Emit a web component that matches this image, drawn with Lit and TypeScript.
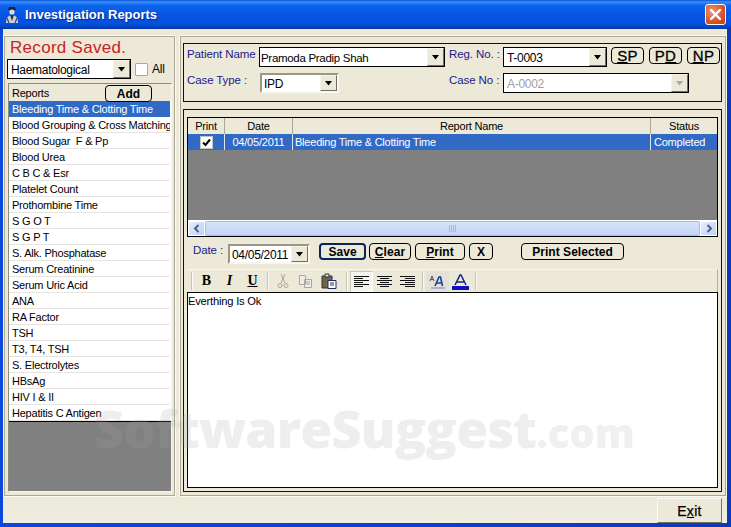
import { LitElement, html, css, svg } from "lit";
import { customElement } from "lit/decorators.js";

const reports = ["Bleeding Time & Clotting Time","Blood Grouping & Cross Matching","Blood Sugar  F & Pp","Blood Urea","C B C & Esr","Platelet Count","Prothombine Time","S G O T","S G P T","S. Alk. Phosphatase","Serum Creatinine","Serum Uric Acid","ANA","RA Factor","TSH","T3, T4, TSH","S. Electrolytes","HBsAg","HIV I & II","Hepatitis C Antigen"];

const arrow = html`<svg width="9" height="5" viewBox="0 0 9 5"><path d="M1 0h7L4.500 4.500z" fill="currentColor"/></svg>`;

@customElement("app-root")
export class AppRoot extends LitElement {
  static styles = css`
    :host { display:block; width:731px; height:527px; position:relative; overflow:hidden; font:11px "Liberation Sans",Arial,sans-serif; letter-spacing:-.22px; color:#000; background:#0a3ed0; }
    .win { width:731px; height:527px; display:flex; flex-direction:column; box-sizing:border-box; padding:0 4px 4px 3px; background:linear-gradient(90deg,#0a49dc,#0a42d0 50%,#0a3ab8); }
    .title { height:29px; margin:0 -4px 0 -3px; flex:none; display:flex; align-items:center; padding:0 5px 0 4px; gap:5px; color:#fff; font-weight:bold; font-size:13px; letter-spacing:-.05px; text-shadow:1px 1px 1px #0a2a90;
      background:linear-gradient(180deg,#0a55d8 0,#3a90fa 2px,#0f66ee 5px,#0656e4 14px,#0450dc 24px,#0340b8 28px,#06309a 29px); }
    .title .t { flex:1; }
    .close { width:21px; height:21px; box-sizing:border-box; border:1px solid #fff; border-radius:3px; background:radial-gradient(circle at 35% 35%,#ee9a7c,#dd5028 60%,#c03810); display:flex; align-items:center; justify-content:center; }
    .body { flex:1; background:#ece9d8; display:flex; flex-direction:column; min-height:0; }
    .main { height:468px; flex:none; display:flex; padding:6px 0 0 0; gap:3px; box-sizing:border-box; }
    .left { width:173px; flex:none; box-sizing:border-box; border:1px solid #faf9f2; outline:1px solid #aca899; outline-offset:-2px; padding:3px 3px 4px 3px; display:flex; flex-direction:column; }
    .saved { color:#cc2222; font-size:17px; line-height:18px; letter-spacing:.3px; height:18px; padding-left:3px; flex:none; }
    .filter { display:flex; align-items:center; margin-top:2px; height:20px; gap:4px; flex:none; font-size:12px; }
    .combo { display:flex; align-items:center; box-sizing:border-box; background:#fff; border:1px solid #000; height:20px; padding-left:3px; white-space:nowrap; font-size:12px; letter-spacing:-.3px; }
    .combo .v { flex:1; overflow:hidden; padding-top:1px; }
    .combo.name { padding-left:1px; font-size:11.500px; }
    .combo .dd { width:17px; height:18px; box-sizing:border-box; background:#ece9d8; border:1px solid; border-color:#f5f4ea #716f64 #716f64 #f5f4ea; display:flex; align-items:center; justify-content:center; color:#000; flex:none; }
    .combo.inset { border:2px solid; border-color:#9b9787 #f8f7f0 #f8f7f0 #9b9787; padding-left:2px; }
    .combo.inset .dd { height:16px; }
    .combo.dis { color:#a0a0a0; }
    .combo.dis .dd { color:#a8a8a8; }
    .chk { width:13px; height:13px; box-sizing:border-box; background:#fff; border:1px solid #aca899; border-radius:1px; flex:none; }
    .list { margin:4px 0 0 1px; flex:1; display:flex; flex-direction:column; border:1px solid #8c8a7e; border-right-color:#f8f7f0; border-bottom-color:#f8f7f0; background:#808080; min-height:0; }
    .lhead { height:17px; display:flex; flex:none; align-items:center; background:#ece9d8; padding-left:3px; position:relative; }
    .add { position:absolute; left:96px; top:1px; width:47px; height:17px; z-index:1; font-size:12px; }
    .rows { background:#fff; border-bottom:1px solid #000; display:flex; flex-direction:column; flex:none; }
    .row { height:16px; box-sizing:border-box; line-height:17px; padding-left:3px; border-bottom:1px solid #e6e4dc; white-space:pre; overflow:hidden; margin-right:1px; }
    .row.sel { background:#316ac5; color:#fff; border-bottom-color:#316ac5; }
    .btn { box-sizing:border-box; border:1px solid #000; border-radius:4px; background:#ece9d8; font-weight:bold; font-size:12px; letter-spacing:.05px; display:flex; align-items:center; justify-content:center; height:17px; white-space:nowrap; flex:none; }
    .btn u { text-underline-offset:1px; }
    .right { flex:1; display:flex; flex-direction:column; min-width:0; box-sizing:border-box; border:1px solid #faf9f2; outline:1px solid #aca899; outline-offset:-2px; padding:7px 4px 4px 3px; gap:7px; }
    .group { border:1px solid #111; box-sizing:border-box; }
    .top { height:59px; flex:none; padding:3px 4px 0 3px; display:grid; grid-template-columns:72px 186px 4px 54px 104px 1fr; grid-template-rows:20px 20px; row-gap:6px; }
    .lab { color:#1a1a90; line-height:14px; white-space:nowrap; font-size:11.500px; letter-spacing:-.1px; }
    .sps { display:flex; gap:5px; padding-left:4px; height:16px; }
    .sps .btn { font-size:15px; font-weight:normal; width:33px; height:17px; letter-spacing:.3px; -webkit-text-stroke:.3px #000; }
    .bottom { flex:1; padding:7px 3px 3px 3px; display:flex; flex-direction:column; min-height:0; }
    .grid { height:120px; flex:none; border:1px solid #000; background:#808080; display:flex; flex-direction:column; box-sizing:border-box; }
    .tr { display:grid; grid-template-columns:37px 68px 358px 1fr; height:16px; flex:none; }
    .tr > div { box-sizing:border-box; border-right:1px solid #aca899; text-align:center; line-height:17px; white-space:nowrap; overflow:hidden; }
    .tr > div:last-child { border-right:none; }
    .hd { background:#ece9d8; }
    .sl { background:#316ac5; color:#fff; }
    .sl > div { border-right-color:#dfe6f4; text-align:left; padding-left:2px; }
    .tr.sl > div:last-child { padding-left:3px; }
    .sl .c { display:flex; align-items:center; justify-content:center; padding:0; }
    .tr.sl > div.ctr { text-align:center; padding:0; }
    .cb { width:13px; height:13px; background:#fff; box-sizing:border-box; display:flex; align-items:center; justify-content:center; border:1px solid #c4c4c4; }
    .fill { flex:1; }
    .sb { height:16px; flex:none; display:flex; background:#f2f5fd; border-top:1px solid #fff; box-sizing:border-box; }
    .sbb { width:17px; box-sizing:border-box; background:linear-gradient(135deg,#e6eefc,#bcd0f7); border:1px solid #fff; display:flex; align-items:center; justify-content:center; }
    .th { flex:1; background:linear-gradient(180deg,#d6e2fb,#c3d5f8); border:1px solid #fff; border-radius:2px; outline:1px solid #a6bce8; outline-offset:-1px; display:flex; align-items:center; justify-content:center; }
    .ctrl { height:32px; flex:none; display:flex; align-items:flex-start; padding-top:6px; box-sizing:border-box; }
    .ctrl .lab { width:41px; padding:0 0 0 6px; box-sizing:border-box; flex:none; }
    .dt { width:82px; margin-top:1px; flex:none; }
    .save { width:47px; margin-left:9px; border-width:2px; border-color:#0a2458; }
    .m3 { margin-left:3px; } .m4 { margin-left:4px; } .m28 { margin-left:28px; }
    .tb { height:23px; flex:none; display:flex; align-items:center; padding-left:1px; border-top:1px solid #f8f7f0; border-right:1px solid #b4b2a4; box-sizing:border-box; }
    .sep { width:1px; height:18px; background:#c6c3b2; margin:0 3px; flex:none; box-shadow:1px 0 0 #fafaf4; }
    .ti { width:23px; height:21px; display:flex; align-items:center; justify-content:center; flex:none; box-sizing:border-box; font:bold 14px "Liberation Serif",serif; letter-spacing:0; }
    .ti.on { background:#f5f4ee; border:1px solid; border-color:#c8c6b8 #fff #fff #c8c6b8; }
    .ed { flex:1; background:#fff; border:1px solid #000; padding:1px 0 0 0; line-height:14px; font-size:11.200px; }
    .foot { flex:1; display:flex; justify-content:flex-end; padding:1px 5px 0 0; background:linear-gradient(180deg,#ece9d8,#f0eee3); }
    .exit { width:65px; height:25px; box-sizing:border-box; background:#ece9d8; border:1px solid; border-color:#fbfaf4 #716f64 #716f64 #fbfaf4; font-size:14px; display:flex; align-items:center; justify-content:center; letter-spacing:.3px; -webkit-text-stroke:.25px #000; }
    .wm { position:absolute; left:94px; top:392px; font:800 52px "Open Sans","DejaVu Sans",sans-serif; letter-spacing:-.9px; color:rgba(160,160,160,.18); white-space:nowrap; pointer-events:none; z-index:5; }
    .wm span { font-size:40px; letter-spacing:0; }
  `;

  private align(mode: "l" | "c" | "r") {
    const widths = mode === "l" ? [15, 9, 15, 9, 15, 9] : mode === "c" ? [15, 9, 15, 9, 15, 9] : [15, 10, 15, 10, 15, 10];
    return svg`<svg width="15" height="13" viewBox="0 0 15 13" shape-rendering="crispEdges">${widths.map((w, i) => {
      const x = mode === "l" ? 0 : mode === "c" ? (15 - w) / 2 : 15 - w;
      return svg`<rect x=${x} y=${1 + i * 2} width=${w} height="1" fill="#111"/>`;
    })}</svg>`;
  }

  render() {
    return html`
      <div class="win">
        <div class="title">
          <svg width="16" height="19" viewBox="0 0 16 19"><path d="M5 2h6l1 3H4z" fill="#223"/><circle cx="8" cy="7" r="2.600" fill="#e8d8c8"/><path d="M2 18c0-6 3-8 6-8s6 2 6 8z" fill="#c8d0e0"/><path d="M6 10l2 6 2-6z" fill="#334"/><path d="M3 13l2 5M13 13l-2 5" stroke="#445" stroke-width="1.200"/></svg>
          <span class="t">Investigation Reports</span>
          <div class="close"><svg width="13" height="13" viewBox="0 0 13 13"><path d="M2 2l9 9M11 2l-9 9" stroke="#fff" stroke-width="2.400" stroke-linecap="round"/></svg></div>
        </div>
        <div class="body">
          <div class="main">
            <div class="left">
              <div class="saved">Record Saved.</div>
              <div class="filter">
                <div class="combo" style="width:124px"><span class="v">Haematological</span><span class="dd">${arrow}</span></div>
                <div class="chk"></div><span>All</span>
              </div>
              <div class="list">
                <div class="lhead">Reports<div class="btn add">Add</div></div>
                <div class="rows">${reports.map((r, i) => html`<div class="row ${i === 0 ? "sel" : ""}">${r}</div>`)}</div>
              </div>
            </div>
            <div class="right">
              <div class="group top">
                <div class="lab">Patient Name :</div>
                <div class="combo name"><span class="v">Pramoda Pradip Shah</span><span class="dd">${arrow}</span></div>
                <div></div>
                <div class="lab">Reg. No. :</div>
                <div class="combo"><span class="v">T-0003</span><span class="dd">${arrow}</span></div>
                <div class="sps">
                  <div class="btn"><span><u>S</u>P</span></div>
                  <div class="btn"><span>P<u>D</u></span></div>
                  <div class="btn"><span><u>N</u>P</span></div>
                </div>
                <div class="lab">Case Type :</div>
                <div class="combo inset" style="width:79px;margin-left:1px"><span class="v">IPD</span><span class="dd">${arrow}</span></div>
                <div></div>
                <div class="lab">Case No :</div>
                <div class="combo dis" style="width:186px"><span class="v">A-0002</span><span class="dd">${arrow}</span></div>
                <div></div>
              </div>
              <div class="group bottom">
                <div class="grid">
                  <div class="tr hd"><div>Print</div><div>Date</div><div>Report Name</div><div>Status</div></div>
                  <div class="tr sl">
                    <div class="c"><span class="cb"><svg width="9" height="9" viewBox="0 0 9 9"><path d="M1 4.500l2.500 2.500L8 1.500" fill="none" stroke="#000" stroke-width="2"/></svg></span></div>
                    <div class="ctr">04/05/2011</div><div>Bleeding Time &amp; Clotting Time</div><div>Completed</div>
                  </div>
                  <div class="fill"></div>
                  <div class="sb">
                    <div class="sbb"><svg width="8" height="9" viewBox="0 0 8 9"><path d="M5.500 1L2 4.500 5.500 8" fill="none" stroke="#4d6185" stroke-width="2"/></svg></div>
                    <div class="th"><svg width="8" height="7" shape-rendering="crispEdges"><path d="M0 0v7M2 0v7M4 0v7M6 0v7" stroke="#9db6ea"/></svg></div>
                    <div class="sbb"><svg width="8" height="9" viewBox="0 0 8 9"><path d="M2.500 1L6 4.500 2.500 8" fill="none" stroke="#4d6185" stroke-width="2"/></svg></div>
                  </div>
                </div>
                <div class="ctrl">
                  <div class="lab">Date :</div>
                  <div class="combo inset dt"><span class="v">04/05/2011</span><span class="dd">${arrow}</span></div>
                  <div class="btn save"><span>Save</span></div>
                  <div class="btn m3" style="width:42px"><span><u>C</u>lear</span></div>
                  <div class="btn m4" style="width:50px"><span><u>P</u>rint</span></div>
                  <div class="btn m4" style="width:24px"><span>X</span></div>
                  <div class="btn m28" style="width:103px"><span>Print Selected</span></div>
                </div>
                <div class="tb">
                  <div class="sep"></div>
                  <div class="ti">B</div>
                  <div class="ti" style="font-style:italic">I</div>
                  <div class="ti" style="text-decoration:underline">U</div>
                  <div class="sep"></div>
                  <div class="ti"><svg width="14" height="16" viewBox="0 0 14 16" fill="none" stroke="#aaa8a0"><path d="M5 1l4 9M9 1L5 10"/><circle cx="4" cy="12.500" r="2"/><circle cx="10" cy="12.500" r="2"/></svg></div>
                  <div class="ti"><svg width="15" height="15" viewBox="0 0 15 15" fill="#efeee6" stroke="#aaa8a0"><path d="M1.500 1.500h6v9h-6zM6.500 5.500h7v8h-7z"/><path d="M8 8h4M8 10h4" /></svg></div>
                  <div class="ti" style="margin-right:3px"><svg width="16" height="16" viewBox="0 0 16 16"><path d="M1 3h10v12H1z" fill="#6e6448" stroke="#333"/><path d="M4 1h4v3H4z" fill="#ddd" stroke="#333"/><path d="M7 7.500h8v8H7z" fill="#fff" stroke="#1c2c60"/><path d="M9 10h4M9 12h4" stroke="#1c2c60"/></svg></div>
                  <div class="sep"></div>
                  <div class="ti on">${this.align("l")}</div>
                  <div class="ti">${this.align("c")}</div>
                  <div class="ti">${this.align("r")}</div>
                  <div class="sep"></div>
                  <div class="ti" style="background:#e4e2d6"><svg width="17" height="15" viewBox="0 0 17 15"><path d="M1 7l2-5 2 5M2 5.500h2" fill="none" stroke="#444" stroke-width=".9"/><path d="M6 12l4-9h1.500l2 9M8 9h5" fill="none" stroke="#1a3c9c" stroke-width="1.600"/><path d="M2 14h14" stroke="#6c86c4"/></svg></div>
                  <div class="ti"><svg width="17" height="17" viewBox="0 0 17 17"><path d="M3 12L8 2h1l5 10M5 9h7" fill="none" stroke="#14208c" stroke-width="1.500"/><path d="M0 13h17v4H0z" fill="#1010c0"/></svg></div>
                  <div class="sep"></div>
                </div>
                <div class="ed">Everthing Is Ok</div>
              </div>
            </div>
          </div>
          <div class="foot"><div class="exit"><span>E<u>x</u>it</span></div></div>
        </div>
      </div>
      <div class="wm">SoftwareSuggest<span>.com</span></div>
    `;
  }
}
